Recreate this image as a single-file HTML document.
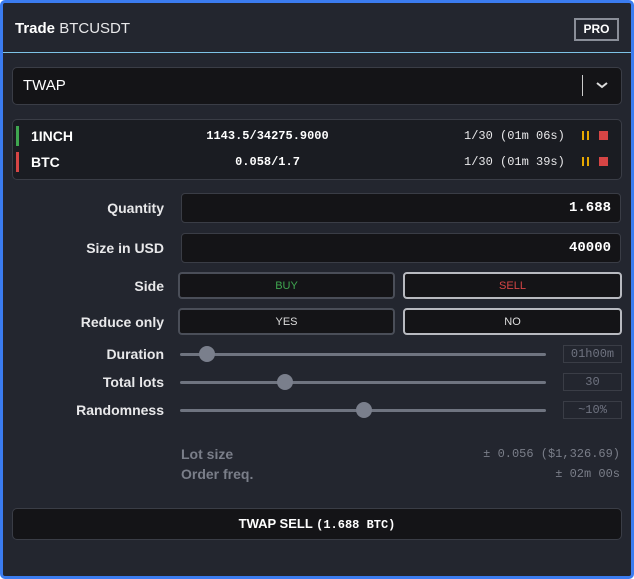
<!DOCTYPE html>
<html><head><style>
*{margin:0;padding:0;box-sizing:border-box}
body{width:634px;height:579px;background:#fff;font-family:"Liberation Sans",sans-serif;position:relative;overflow:hidden}
.frame{position:absolute;left:0;top:0;width:634px;height:579px;border:3px solid #3b7cf0;border-radius:5px;background:#23262f}
.a{position:absolute}
.mono{font-family:"Liberation Mono","DejaVu Sans Mono",monospace}
.lbl{position:absolute;right:470px;color:#e8e8ea;font-size:14px;font-weight:bold;text-align:right}
.inp{position:absolute;left:181px;width:440px;height:30px;background:#141417;border:1px solid #3a3d46;border-radius:4px;color:#fff;font-size:14px;font-weight:bold;text-align:right;padding-right:9px;line-height:28px}
.btn{position:absolute;height:27px;background:#141417;border-radius:4px;text-align:center;font-size:11px;line-height:24px}
.track{position:absolute;left:180px;width:366px;height:3px;background:#6f7480;border-radius:2px}
.thumb{position:absolute;width:16px;height:16px;border-radius:50%;background:#7a7f8c}
.val{position:absolute;left:563px;width:59px;height:18px;border:1px solid #3a3d46;color:#6f7380;font-size:12px;text-align:center;line-height:16px}
</style></head><body>
<div class="frame"></div>
<div class="a" style="left:15px;top:20px;color:#fff;font-size:15px;"><b>Trade</b> <span style="color:#e8e8ea">BTCUSDT</span></div>
<div class="a" style="left:574px;top:18px;width:45px;height:23px;border:2px solid #8a8e98;color:#fff;font-size:12px;font-weight:bold;text-align:center;line-height:19px">PRO</div>
<div class="a" style="left:3px;top:52px;width:628px;height:1px;background:#7ec3e6"></div>
<div class="a" style="left:12px;top:67px;width:610px;height:38px;background:#141417;border:1px solid #3a3d46;border-radius:5px"></div>
<div class="a" style="left:23px;top:77px;color:#fff;font-size:15px">TWAP</div>
<div class="a" style="left:582px;top:75px;width:1px;height:21px;background:#ccc"></div>
<svg class="a" style="left:595px;top:80px" width="14" height="10"><path d="M2 3l5 4 5-4" stroke="#ddd" stroke-width="2" fill="none"/></svg>
<div class="a" style="left:12px;top:119px;width:610px;height:61px;background:#1a1c22;border:1px solid #3a3d46;border-radius:5px"></div>
<div class="a" style="left:16px;top:126px;width:3px;height:20px;background:#3fa650"></div>
<div class="a" style="left:16px;top:152px;width:3px;height:20px;background:#d64545"></div>
<div class="a" style="left:31px;top:128px;color:#fff;font-size:14px;font-weight:bold">1INCH</div>
<div class="a" style="left:31px;top:154px;color:#fff;font-size:14px;font-weight:bold">BTC</div>
<div class="a mono" style="left:170px;width:195px;top:129px;color:#fff;font-size:12px;font-weight:bold;text-align:center">1143.5/34275.9000</div>
<div class="a mono" style="left:170px;width:195px;top:155px;color:#fff;font-size:12px;font-weight:bold;text-align:center">0.058/1.7</div>
<div class="a mono" style="left:464px;top:129px;color:#e8e8ea;font-size:12px">1/30 (01m 06s)</div>
<div class="a mono" style="left:464px;top:155px;color:#e8e8ea;font-size:12px">1/30 (01m 39s)</div>
<div class="a" style="left:582px;top:131px;width:2px;height:9px;background:#e6a800"></div><div class="a" style="left:587px;top:131px;width:2px;height:9px;background:#e6a800"></div>
<div class="a" style="left:582px;top:157px;width:2px;height:9px;background:#e6a800"></div><div class="a" style="left:587px;top:157px;width:2px;height:9px;background:#e6a800"></div>
<div class="a" style="left:599px;top:131px;width:9px;height:9px;background:#d64545"></div>
<div class="a" style="left:599px;top:157px;width:9px;height:9px;background:#d64545"></div>

<div class="lbl" style="top:200px">Quantity</div>
<div class="inp mono" style="top:193px">1.688</div>
<div class="lbl" style="top:240px">Size in USD</div>
<div class="inp mono" style="top:233px">40000</div>
<div class="lbl" style="top:278px">Side</div>
<div class="btn" style="left:178px;top:272px;width:217px;border:2px solid #4a4e58;color:#3fa650">BUY</div>
<div class="btn" style="left:403px;top:272px;width:219px;border:2px solid #b8bac0;color:#d64545">SELL</div>
<div class="lbl" style="top:314px">Reduce only</div>
<div class="btn" style="left:178px;top:308px;width:217px;border:2px solid #4a4e58;color:#ddd">YES</div>
<div class="btn" style="left:403px;top:308px;width:219px;border:2px solid #b8bac0;color:#ddd">NO</div>

<div class="lbl" style="top:346px">Duration</div>
<div class="track" style="top:353px"></div><div class="thumb" style="left:199px;top:346px"></div>
<div class="val mono" style="top:345px">01h00m</div>
<div class="lbl" style="top:374px">Total lots</div>
<div class="track" style="top:381px"></div><div class="thumb" style="left:277px;top:374px"></div>
<div class="val mono" style="top:373px">30</div>
<div class="lbl" style="top:402px">Randomness</div>
<div class="track" style="top:409px"></div><div class="thumb" style="left:356px;top:402px"></div>
<div class="val mono" style="top:401px">~10%</div>

<div class="a" style="left:181px;top:446px;color:#7a7e89;font-size:14px;font-weight:bold">Lot size</div>
<div class="a" style="left:181px;top:466px;color:#7a7e89;font-size:14px;font-weight:bold">Order freq.</div>
<div class="a mono" style="right:14px;top:447px;color:#7a7e89;font-size:12px">± 0.056 ($1,326.69)</div>
<div class="a mono" style="right:14px;top:467px;color:#7a7e89;font-size:12px">± 02m 00s</div>

<div class="a" style="left:12px;top:508px;width:610px;height:32px;background:#141417;border:1px solid #3a3d46;border-radius:5px;color:#fff;font-size:13px;font-weight:bold;text-align:center;line-height:30px">TWAP SELL <span class="mono" style="font-size:12px">(1.688 BTC)</span></div>
</body></html>
